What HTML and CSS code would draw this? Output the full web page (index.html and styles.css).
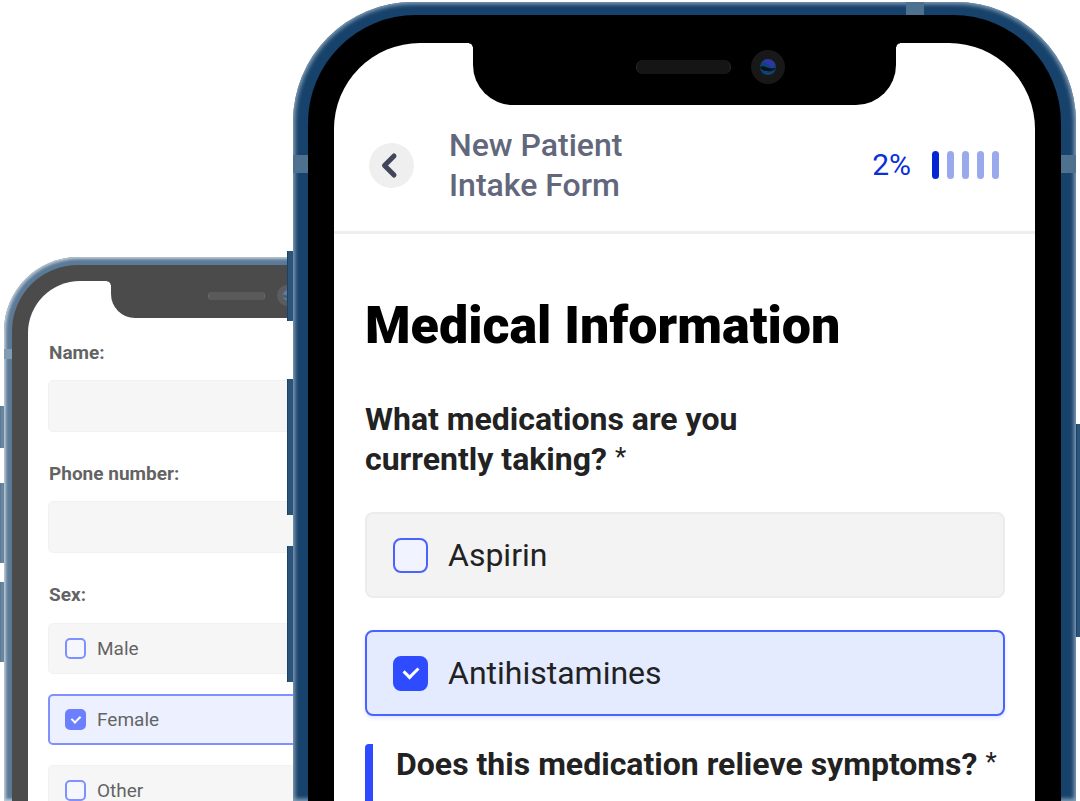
FILE: index.html
```html
<!DOCTYPE html>
<html lang="en">
<head>
  <meta charset="UTF-8">
  <meta name="viewport" content="width=device-width, initial-scale=1.0">
  <title>New Patient Intake Form</title>
  <link rel="stylesheet" href="styles.css">
</head>
<body>
  <main class="stage">
    <section class="phone phone-back">
      <span class="side-btn btn-mute"></span>
      <span class="side-btn btn-up"></span>
      <span class="side-btn btn-down"></span>
      <span class="band band-left"></span>
      <div class="bezel">
        <div class="screen">
          <div class="notch">
            <span class="speaker"></span>
            <svg class="camera" viewBox="0 0 34 34">
              <circle cx="17" cy="17" r="17" fill="#181818"/>
              <circle cx="17" cy="17" r="8" fill="#0f4474"/>
              <path d="M13 10c4-2 10 0 11 5l-4 4c-1-4-3-6-7-6z" fill="#2f35a5"/>
              <path d="M9 17c4-3 8 3 16 1-3 3-6 4-9 3-3 0-6-1-7-4z" fill="#07131f"/>
            </svg>
          </div>
          <form class="details">
            <label class="field-label" for="name">Name:</label>
            <input class="field" type="text" id="name" name="name">
            <label class="field-label" for="phone">Phone number:</label>
            <input class="field" type="text" id="phone" name="phone">
            <fieldset class="group">
              <legend class="field-label">Sex:</legend>
              <label class="option"><input type="checkbox" name="sex">Male</label>
              <label class="option selected"><input type="checkbox" name="sex" checked>Female</label>
              <label class="option"><input type="checkbox" name="sex">Other</label>
            </fieldset>
          </form>
        </div>
      </div>
    </section>

    <section class="phone phone-front">
      <span class="side-btn btn-mute"></span>
      <span class="side-btn btn-up"></span>
      <span class="side-btn btn-down"></span>
      <span class="side-btn btn-power"></span>
      <span class="band band-left"></span>
      <span class="band band-right"></span>
      <span class="band band-top"></span>
      <div class="bezel">
        <div class="screen">
          <div class="notch">
            <span class="speaker"></span>
            <svg class="camera" viewBox="0 0 34 34">
              <circle cx="17" cy="17" r="17" fill="#181818"/>
              <circle cx="17" cy="17" r="8" fill="#0f4474"/>
              <path d="M13 10c4-2 10 0 11 5l-4 4c-1-4-3-6-7-6z" fill="#2f35a5"/>
              <path d="M9 17c4-3 8 3 16 1-3 3-6 4-9 3-3 0-6-1-7-4z" fill="#07131f"/>
            </svg>
          </div>
          <header class="form-header">
            <button class="back" type="button" aria-label="Back">
              <svg viewBox="0 0 45 45">
                <path d="M25 13L15.500 22.500L25 32" fill="none" stroke="#43465a" stroke-width="5" stroke-linecap="round" stroke-linejoin="round"/>
              </svg>
            </button>
            <p class="form-title">New Patient<br>Intake Form</p>
            <span class="percent">2%</span>
            <div class="steps">
              <span class="step done"></span>
              <span class="step"></span>
              <span class="step"></span>
              <span class="step"></span>
              <span class="step"></span>
            </div>
          </header>
          <form class="medical">
            <h1>Medical Information</h1>
            <fieldset class="group">
              <legend class="question">What medications are you<br>currently taking? <sup>*</sup></legend>
              <label class="option"><input type="checkbox" name="medication">Aspirin</label>
              <label class="option selected"><input type="checkbox" name="medication" checked>Antihistamines</label>
            </fieldset>
            <div class="follow-up">
              <p class="question">Does this medication relieve symptoms? <sup>*</sup></p>
            </div>
          </form>
        </div>
      </div>
    </section>
  </main>
</body>
</html>
```
FILE: styles.css
```css
* {
  box-sizing: border-box;
}

body {
  margin: 0;
  background: #fff;
  font-family: Roboto, "Liberation Sans", sans-serif;
  color: #222;
}

.stage {
  display: flex;
  align-items: stretch;
  height: 100vh;
  overflow: hidden;
  padding: 0 4px;
}

/* phone body */
.phone {
  position: relative;
  background: #17426b;
}

.phone-back {
  flex: 0 0 464px;
  margin: 257px -175px 0 0;
  padding: 8px 8px 0;
  border-radius: 74px 74px 0 0;
  box-shadow: inset 0 0 3px 2px #a3b6c6;
  opacity: 0.7;
}

.phone-front {
  flex: 1;
  margin-top: 2px;
  padding: 13px 15px 0;
  border-radius: 120px 120px 0 0;
  box-shadow: inset 0 0 4px 2px #8ba4ba;
}

.bezel {
  height: 100%;
  background: #000;
}

.phone-back .bezel {
  padding: 16px 16px 0;
  border-radius: 66px 66px 0 0;
}

.phone-front .bezel {
  padding: 28px 26px 0;
  border-radius: 108px 108px 0 0;
}

.screen {
  height: 100%;
  background: #fff;
  overflow: hidden;
}

.phone-back .screen {
  border-radius: 52px 52px 0 0;
}

.phone-front .screen {
  border-radius: 86px 86px 0 0;
}

.side-btn {
  position: absolute;
  background: #2b5478;
  border-left: 1px solid #17426b;
}

.phone-front .side-btn {
  left: -6px;
  width: 6px;
}

.phone-front .btn-mute {
  top: 249px;
  height: 70px;
}

.phone-front .btn-up {
  top: 377px;
  height: 136px;
}

.phone-front .btn-down {
  top: 544px;
  height: 136px;
}

.phone-front .btn-power {
  left: auto;
  right: -6px;
  top: 422px;
  height: 213px;
}

.phone-back .side-btn {
  left: -4px;
  width: 4px;
}

.phone-back .btn-mute {
  top: 149px;
  height: 42px;
}

.phone-back .btn-up {
  top: 226px;
  height: 80px;
}

.phone-back .btn-down {
  top: 325px;
  height: 80px;
}

.band {
  position: absolute;
  background: #4f7190;
}

.band-left,
.band-right {
  top: 153px;
  width: 15px;
  height: 18px;
}

.band-left {
  left: 0;
}

.band-right {
  right: 0;
}

.band-top {
  top: 0;
  right: 152px;
  width: 18px;
  height: 13px;
}

.phone-back .band-left {
  top: 92px;
  width: 8px;
  height: 10px;
}

/* notch */
.notch {
  position: relative;
  display: flex;
  justify-content: center;
  align-items: flex-start;
  margin: 0 auto;
  background: #000;
}

.phone-front .notch {
  width: 423px;
  height: 62px;
  padding: 7px 0 0 52px;
  gap: 20px;
  border-radius: 0 0 40px 40px;
}

.phone-back .notch {
  width: 251px;
  height: 37px;
  padding: 4px 0 0 33px;
  gap: 12px;
  border-radius: 0 0 24px 24px;
}

.notch::before,
.notch::after {
  content: "";
  position: absolute;
  top: 0;
  width: 4px;
  height: 4px;
}

.notch::before {
  left: -4px;
  background: radial-gradient(circle at 0 100%, #fff 3px, #000 4px);
}

.notch::after {
  right: -4px;
  background: radial-gradient(circle at 100% 100%, #fff 3px, #000 4px);
}

.speaker {
  width: 95px;
  height: 14px;
  margin-top: 10px;
  border-radius: 7px;
  border: solid #2b2b2b;
  border-width: 0 1px;
  background: #151515;
}

.camera {
  width: 34px;
  height: 34px;
}

.phone-back .speaker {
  width: 57px;
  height: 8px;
  margin-top: 7px;
}

.phone-back .camera {
  width: 21px;
  height: 21px;
}

/* header */
.form-header {
  display: flex;
  align-items: center;
  padding: 20px 36px 26px 35px;
  border-bottom: 3px solid #eee;
}

.back {
  width: 45px;
  height: 45px;
  padding: 0;
  border: none;
  border-radius: 50%;
  background: #efefef;
  cursor: pointer;
}

.back svg {
  display: block;
}

.form-title {
  flex: 1;
  margin: 0 0 0 35px;
  font-size: 32px;
  line-height: 40px;
  font-weight: 500;
  color: #62677c;
}

.percent {
  font-size: 30px;
  line-height: 40px;
  color: #0b2fd8;
}

.steps {
  display: flex;
  gap: 8px;
  margin-left: 21px;
}

.step {
  width: 7px;
  height: 28px;
  border-radius: 4px;
  background: #9aa8ec;
}

.step.done {
  background: #0526d2;
}

/* forms */
.group {
  min-width: 0;
  margin: 0;
  padding: 0;
  border: none;
}

.medical {
  padding: 62px 30px 0 31px;
}

h1 {
  margin: 0 0 43px;
  font-size: 52px;
  line-height: 60px;
  font-weight: 900;
  color: #000;
}

.question {
  margin: 0;
  padding: 0;
  font-size: 32px;
  line-height: 40px;
  font-weight: 700;
}

.question sup {
  font-size: 26px;
  line-height: 20px;
  font-weight: 400;
  vertical-align: 4px;
}

.option {
  display: flex;
  align-items: center;
  border: 2px solid #ececec;
  background: #f3f3f3;
}

.option input {
  display: flex;
  align-items: center;
  justify-content: center;
  flex: none;
  appearance: none;
  margin: 0;
  border: 2px solid #4a63ff;
  background: #f1f3fe;
}

.option input:checked {
  border-color: #2f4bff;
  background: #2f4bff;
}

.option input:checked::after {
  content: "";
  width: 7px;
  height: 11px;
  margin-bottom: 4px;
  border: solid #fff;
  border-width: 0 3px 3px 0;
  transform: rotate(45deg);
}

.option.selected {
  border-color: #4a63ff;
  background: #e4ebff;
}

.medical .option {
  height: 86px;
  padding-left: 26px;
  gap: 20px;
  border-radius: 8px;
  font-size: 32px;
}

.medical .option input {
  width: 35px;
  height: 35px;
  border-radius: 8px;
}

.medical legend {
  margin-bottom: 33px;
}

.medical .option + .option {
  margin-top: 32px;
}

.medical .option.selected {
  box-shadow: 0 2px 4px #dfe5ff;
}

.follow-up {
  height: 200px;
  margin-top: 28px;
  padding-left: 23px;
  border-left: 8px solid #2f4bff;
  border-radius: 4px 0 0 4px;
}

.details {
  padding: 23px 20px 0;
}

.field-label {
  display: block;
  padding: 0 0 0 1px;
  font-size: 19px;
  line-height: 24px;
  font-weight: 700;
}

.field {
  display: block;
  width: 100%;
  height: 52px;
  margin: 15px 0 30px;
  padding: 0 16px;
  border: 1px solid #ececec;
  border-radius: 5px;
  background: #f3f3f3;
  font-size: 19px;
}

.details legend {
  margin-bottom: 16px;
}

.details .option {
  height: 51px;
  padding-left: 16px;
  gap: 11px;
  border-width: 1px;
  border-radius: 5px;
  font-size: 19px;
}

.details .option.selected {
  border-width: 2px;
  padding-left: 15px;
}

.details .option + .option {
  margin-top: 20px;
}

.details .option input {
  width: 21px;
  height: 21px;
  border-radius: 5px;
}

.details .option input:checked::after {
  width: 4px;
  height: 7px;
  margin-bottom: 2px;
  border-width: 0 2px 2px 0;
}
```
